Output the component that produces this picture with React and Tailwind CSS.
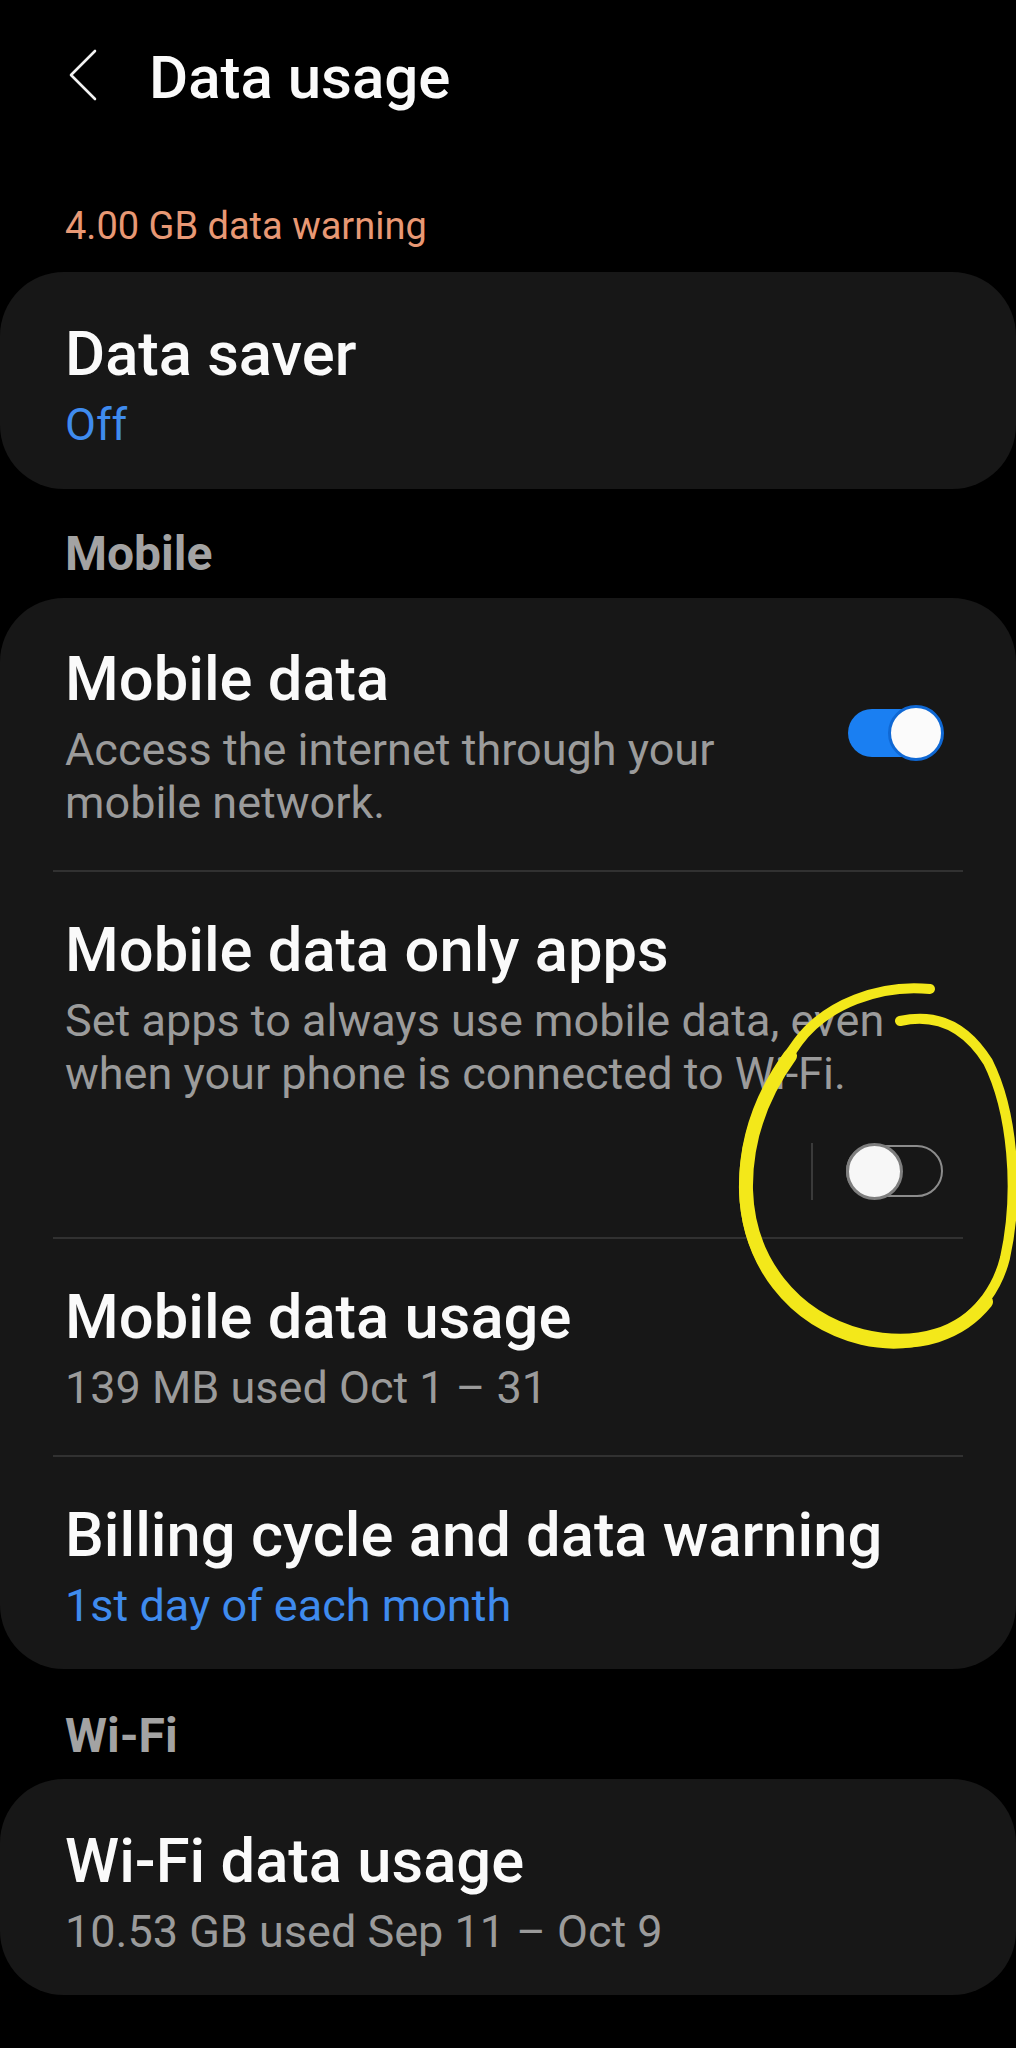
export default function App() {
  const title = "text-[61.5px] leading-[72px] font-medium text-[#fafafa]";
  const sub = "mt-[8px] text-[45px] leading-[53px] text-[#9b9b9b]";
  const blue = "mt-[8px] text-[45px] leading-[53px] text-[#3f8bee]";
  const header = "pl-[65px] text-[48px] leading-[54px] font-bold text-[#a3a3a3]";
  const divider = <div className="h-[2px] mx-[53px] bg-[#313131]" />;

  return (
    <div className="relative w-[1016px] min-h-[2048px] bg-black font-['Roboto','Noto_Sans',sans-serif] text-white overflow-hidden">
      {/* Header */}
      <div className="flex items-start pt-[48px]">
        <svg className="ml-[68px] mt-[1px]" width="30" height="52" viewBox="0 0 30 52" fill="none">
          <path d="M27 2 L3 26 L27 50" stroke="#f2f2f2" strokeWidth="2.6" strokeLinecap="round" strokeLinejoin="round" />
        </svg>
        <h1 className="ml-[51px] text-[60px] leading-[60px] font-medium text-[#fafafa]">Data usage</h1>
      </div>

      <div className="mt-[96px] pl-[65px] text-[38px] leading-[44px] text-[#e89874]">4.00 GB data warning</div>

      {/* Data saver card */}
      <div className="mt-[24px] rounded-[64px] bg-[#171717] pt-[46px] pb-[38px] pl-[65px] pr-[72px]">
        <div className={title}>Data saver</div>
        <div className={blue}>Off</div>
      </div>

      <div className={`mt-[38px] ${header}`}>Mobile</div>

      {/* Mobile card */}
      <div className="mt-[17px] rounded-[64px] bg-[#171717]">
        <div className="flex items-center pt-[45px] pb-[41px] pl-[65px] pr-[72px]">
          <div className="flex-1 min-w-0 pr-[40px]">
            <div className={title}>Mobile data</div>
            <div className={sub}>Access the internet through your mobile network.</div>
          </div>
          <div className="relative w-[96px] h-[58px] mb-[6px] flex items-center">
            <div className="w-[94px] h-[48px] rounded-full bg-[#1a7ff2]" />
            <div className="absolute right-0 top-[1px] w-[56px] h-[56px] rounded-full bg-[#fbfbfb] border-[3px] border-[#0f68d4]" />
          </div>
        </div>
        {divider}
        <div className="pt-[42px] pb-[37px] pl-[65px] pr-[73px]">
          <div className={title}>Mobile data only apps</div>
          <div className={sub}>Set apps to always use mobile data, even when your phone is connected to Wi-Fi.</div>
          <div className="mt-[42px] h-[58px] flex items-center justify-end">
            <div className="w-[2px] h-[57px] bg-[#3a3a3a]" />
            <div className="relative ml-[33px] w-[97px] h-[57px] flex items-center">
              <div className="w-[97px] h-[52px] rounded-full border-2 border-[#8c8c8c]" />
              <div className="absolute left-0 top-0 w-[57px] h-[57px] rounded-full bg-[#f7f7f7] border-[3px] border-[#7e7e7e]" />
            </div>
          </div>
        </div>
        {divider}
        <div className="pt-[42px] pb-[41px] pl-[65px] pr-[72px]">
          <div className={title}>Mobile data usage</div>
          <div className={sub}>139 MB used Oct 1 – 31</div>
        </div>
        {divider}
        <div className="pt-[42px] pb-[37px] pl-[65px] pr-[72px]">
          <div className={title}>Billing cycle and data warning</div>
          <div className={blue}>1st day of each month</div>
        </div>
      </div>

      <div className={`mt-[40px] ${header}`}>Wi-Fi</div>

      {/* Wi-Fi card */}
      <div className="mt-[16px] rounded-[64px] bg-[#171717] pt-[46px] pb-[37px] pl-[65px] pr-[72px]">
        <div className={title}>Wi-Fi data usage</div>
        <div className={sub}>10.53 GB used Sep 11 – Oct 9</div>
      </div>

      {/* Yellow hand-drawn annotation */}
      <svg className="absolute left-0 top-0 pointer-events-none" width="1016" height="2048" viewBox="0 0 1016 2048" fill="none">
        <path
          d="M930 989 C880 984 826 1004 798 1042 C764 1088 743 1135 744 1190 C746 1262 790 1322 862 1340 C932 1356 990 1318 1005 1258 C1020 1190 1012 1110 988 1062 C968 1030 940 1012 900 1021"
          stroke="#f3e81a"
          strokeWidth="10"
          strokeLinecap="round"
          strokeLinejoin="round"
        />
        <path
          d="M790 1056 C764 1092 745 1135 746 1190 C748 1260 792 1318 862 1336 C920 1350 962 1332 986 1302"
          stroke="#f3e81a"
          strokeWidth="14"
          strokeLinecap="round"
        />
      </svg>
    </div>
  );
}
